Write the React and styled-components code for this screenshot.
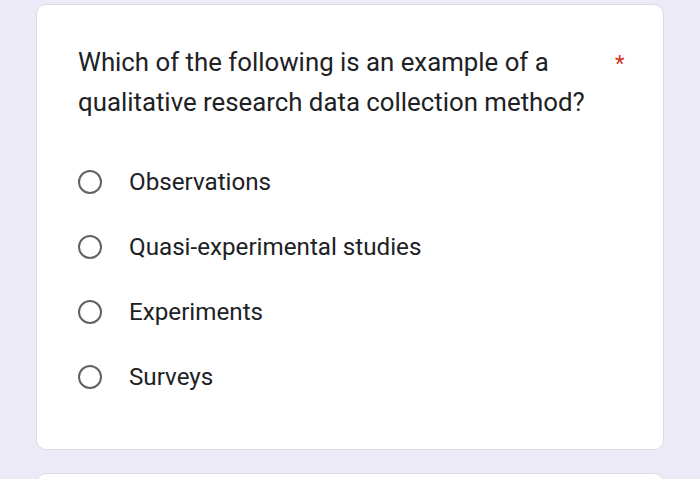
import styled, { createGlobalStyle } from "styled-components";

const GlobalStyle = createGlobalStyle`
  html, body {
    margin: 0;
    padding: 0;
    background: #edeaf7;
  }
  body {
    font-family: Roboto, "Noto Sans", Arial, sans-serif;
  }
`;

const options = [
  "Observations",
  "Quasi-experimental studies",
  "Experiments",
  "Surveys",
];

const App = () => {
  return (
    <>
      <GlobalStyle />
      <Page>
        <Card>
          <Header>
            <Question>
              Which of the following is an example of a qualitative research
              data collection method?
            </Question>
            <Required>*</Required>
          </Header>
          <Options>
            {options.map((label) => (
              <Option key={label}>
                <Radio />
                <Label>{label}</Label>
              </Option>
            ))}
          </Options>
        </Card>
        <Card $short />
      </Page>
    </>
  );
};

const Page = styled.div`
  display: flex;
  flex-direction: column;
  gap: 23px;
  padding: 4px 36px 0 36px;
  height: 479px;
  box-sizing: border-box;
  overflow: hidden;
`;

const Card = styled.div`
  flex-shrink: 0;
  background: #fff;
  border: 1px solid #dcdbe4;
  border-radius: 10px;
  box-sizing: border-box;
  height: ${(p) => (p.$short ? "40px" : "446px")};
  padding: 37px 0 0 41px;
`;

const Header = styled.div`
  display: flex;
  align-items: flex-start;
`;

const Question = styled.div`
  width: 522px;
  font-size: 25.8px;
  line-height: 40px;
  color: #202124;
`;

const Required = styled.span`
  margin-left: 15px;
  margin-top: 10px;
  font-size: 22px;
  line-height: 24px;
  color: #d93025;
`;

const Options = styled.div`
  display: flex;
  flex-direction: column;
  gap: 41px;
  margin-top: 48px;
`;

const Option = styled.div`
  display: flex;
  align-items: center;
  height: 24px;
`;

const Radio = styled.span`
  width: 24px;
  height: 24px;
  box-sizing: border-box;
  border: 2.5px solid #5f6368;
  border-radius: 50%;
  flex-shrink: 0;
`;

const Label = styled.span`
  margin-left: 27px;
  font-size: 24.2px;
  color: #202124;
`;

export default App;
